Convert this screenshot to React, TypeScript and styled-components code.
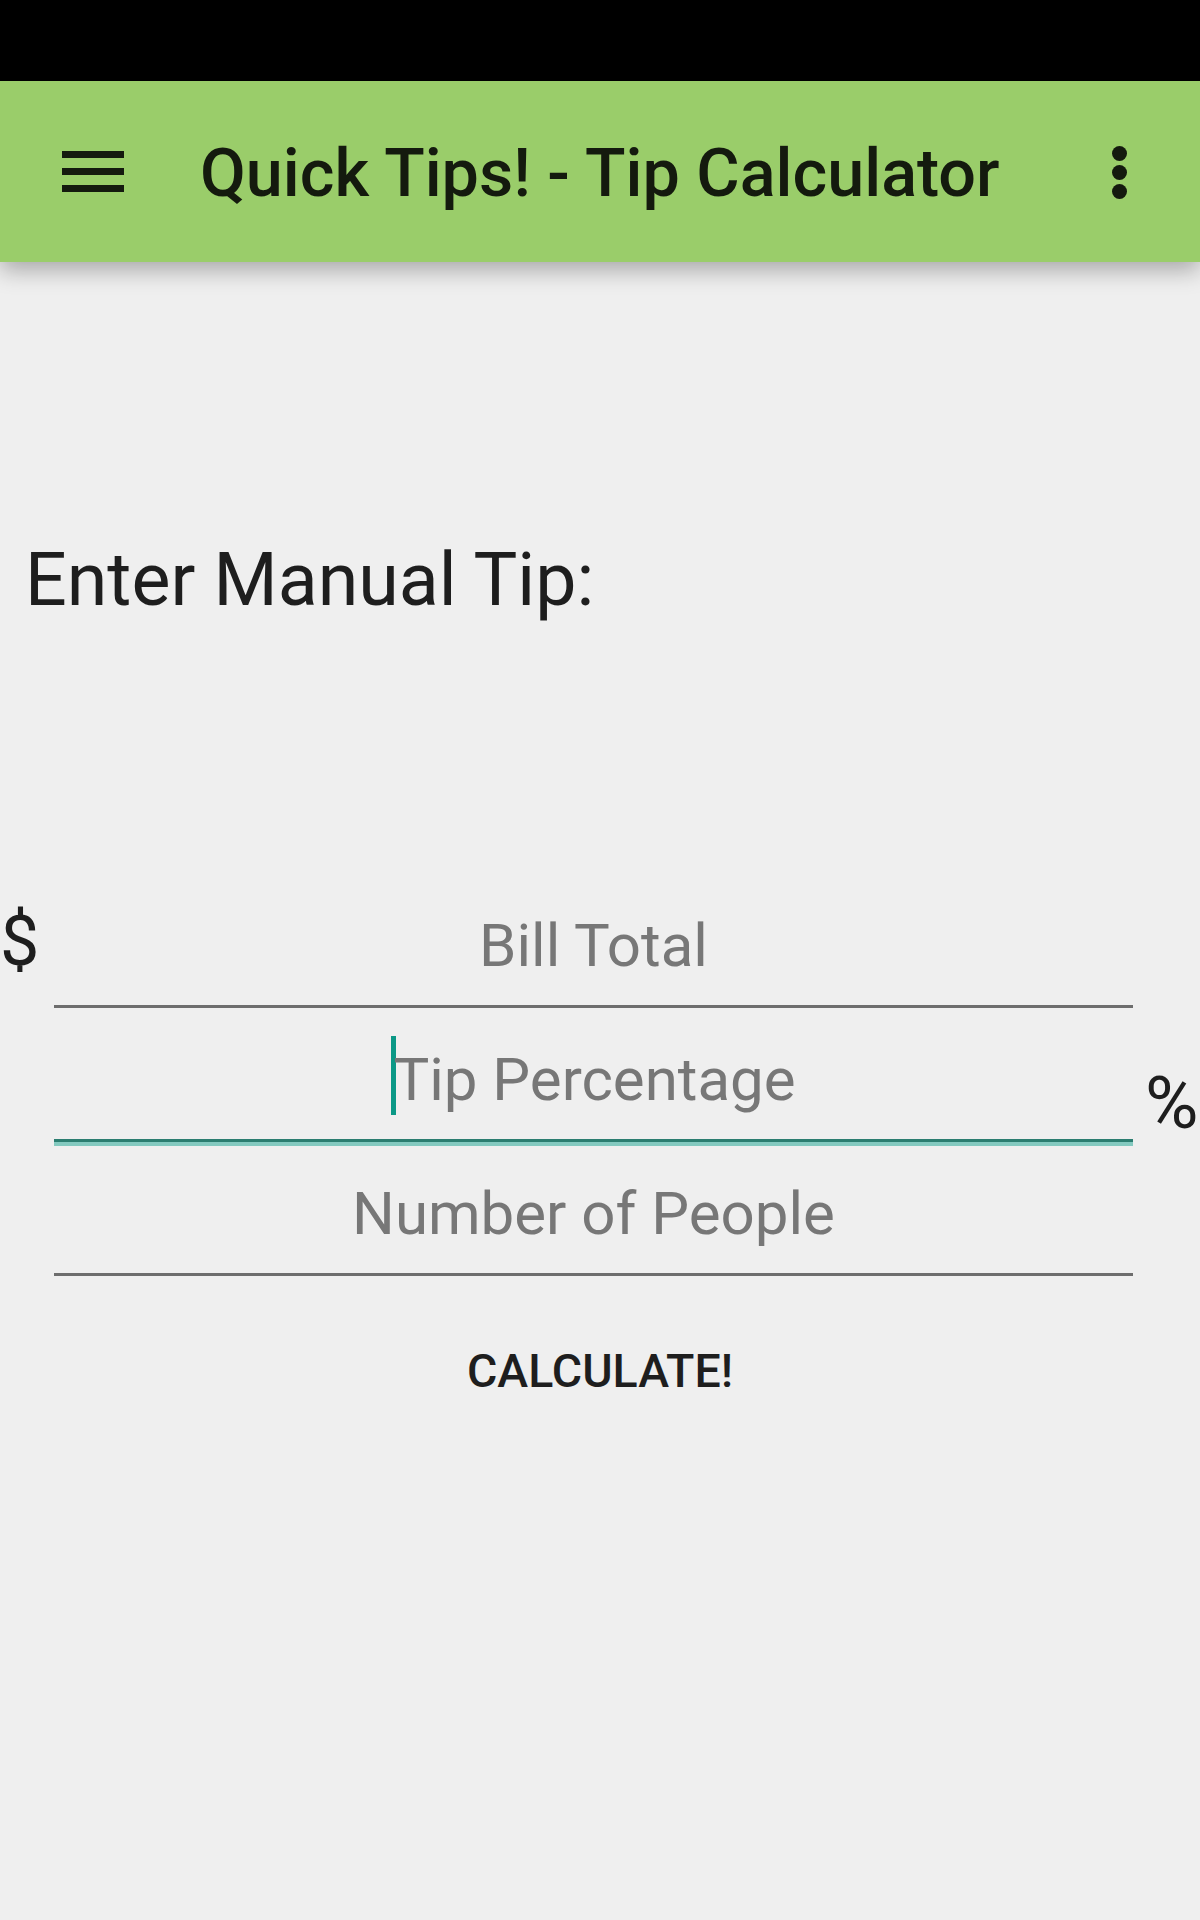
import React, { FC } from "react";
import styled, { createGlobalStyle } from "styled-components";

const GlobalStyle = createGlobalStyle`
  html, body {
    margin: 0;
    padding: 0;
    background: #efefef;
  }
  body {
    font-family: Roboto, "Noto Sans", sans-serif;
  }
`;

const App: FC = () => {
  return (
    <Screen>
      <GlobalStyle />
      <StatusBar />
      <AppBar>
        <IconButton aria-label="menu">
          <svg width="62" height="41" viewBox="0 0 62 41">
            <rect x="0" y="0" width="62" height="7" fill="#141a0e" />
            <rect x="0" y="17" width="62" height="7" fill="#141a0e" />
            <rect x="0" y="34" width="62" height="7" fill="#141a0e" />
          </svg>
        </IconButton>
        <Title>Quick Tips! - Tip Calculator</Title>
        <OverflowButton aria-label="more options">
          <svg width="15" height="53" viewBox="0 0 15 53">
            <circle cx="7.5" cy="7.5" r="7.5" fill="#141a0e" />
            <circle cx="7.5" cy="26.5" r="7.5" fill="#141a0e" />
            <circle cx="7.5" cy="45.5" r="7.5" fill="#141a0e" />
          </svg>
        </OverflowButton>
      </AppBar>

      <Content>
        <Heading>Enter Manual Tip:</Heading>

        <Form>
          <FieldRow>
            <Affix>$</Affix>
            <Field>
              <Placeholder>Bill Total</Placeholder>
            </Field>
            <Affix />
          </FieldRow>
          <FieldRow>
            <Affix />
            <Field focused>
              <Placeholder>
                <Caret />
                Tip Percentage
              </Placeholder>
            </Field>
            <Suffix>%</Suffix>
          </FieldRow>
          <FieldRow>
            <Affix />
            <Field>
              <Placeholder>Number of People</Placeholder>
            </Field>
            <Affix />
          </FieldRow>
        </Form>

        <CalcButton>CALCULATE!</CalcButton>
      </Content>
    </Screen>
  );
};

export default App;

const Screen = styled.div`
  width: 1200px;
  min-height: 1920px;
  background: #efefef;
  overflow: hidden;
`;

const StatusBar = styled.div`
  height: 81px;
  background: #000;
`;

const AppBar = styled.header`
  position: relative;
  z-index: 1;
  height: 181px;
  background: #9acd6a;
  box-shadow: 0 8px 22px rgba(0, 0, 0, 0.3);
  display: flex;
  align-items: center;
  padding: 0 73px 0 62px;
  box-sizing: border-box;
`;

const IconButton = styled.div`
  display: flex;
  width: 62px;
  height: 41px;
  margin-top: -1px;
`;

const Title = styled.h1`
  margin: 0 0 0 76px;
  flex: 1;
  color: #141a0e;
  font-family: Roboto, sans-serif;
  font-size: 66.5px;
  font-weight: 500;
  line-height: 78px;
  padding-top: 3px;
  white-space: nowrap;
`;

const OverflowButton = styled.div`
  display: flex;
  width: 15px;
  height: 53px;
  margin-top: 1px;
`;

const Content = styled.main`
  display: flex;
  flex-direction: column;
`;

const Heading = styled.h2`
  margin: 275px 0 0 25px;
  color: #1e1e1e;
  font-family: Roboto, sans-serif;
  font-size: 73.5px;
  font-weight: 400;
  line-height: 86px;
`;

const Form = styled.div`
  margin-top: 251px;
  display: flex;
  flex-direction: column;
`;

const FieldRow = styled.div`
  display: grid;
  grid-template-columns: 54px 1079px 1fr;
  align-items: end;
`;

const Affix = styled.span`
  color: #1e1e1e;
  font-size: 70px;
  line-height: 82px;
  padding-bottom: 26px;
  align-self: end;
`;

const Suffix = styled.span`
  color: #1e1e1e;
  font-size: 73px;
  line-height: 84px;
  padding-left: 12px;
  margin-bottom: -3px;
  align-self: end;
`;

const Field = styled.div<{ focused?: boolean }>`
  height: 134px;
  box-sizing: border-box;
  display: flex;
  align-items: flex-end;
  justify-content: center;
  padding-bottom: 24px;
  border-bottom: 3px solid ${(p) => (p.focused ? "#2b7d70" : "#6d6d6d")};
  box-shadow: ${(p) => (p.focused ? "0 4px 0 #83c9bf" : "none")};
`;

const Placeholder = styled.span`
  color: #777777;
  font-size: 60px;
  line-height: 70px;
  white-space: nowrap;
`;

const Caret = styled.span`
  display: inline-block;
  width: 5px;
  height: 79px;
  margin-right: -3px;
  vertical-align: -15px;
  background: #0b9886;
`;

const CalcButton = styled.button`
  align-self: center;
  margin-top: 68px;
  padding: 0;
  border: none;
  background: transparent;
  color: #1e1e1e;
  font-family: Roboto, sans-serif;
  font-size: 46.5px;
  font-weight: 500;
  line-height: 54px;
`;
